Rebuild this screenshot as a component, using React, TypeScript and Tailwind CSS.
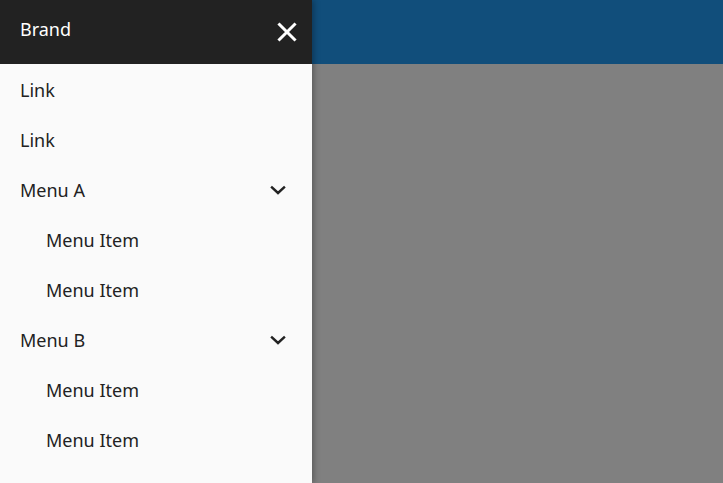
import React from "react";

type NavItem = {
  label: string;
  children?: string[];
};

const items: NavItem[] = [
  { label: "Link" },
  { label: "Link" },
  { label: "Menu A", children: ["Menu Item", "Menu Item"] },
  { label: "Menu B", children: ["Menu Item", "Menu Item"] },
];

const Chevron = () => (
  <svg width="16" height="10" viewBox="0 0 16 10" fill="none" stroke="#222" strokeWidth="2.4" strokeLinecap="square">
    <path d="M2 2.5l6 5.5 6-5.5" />
  </svg>
);

const CloseIcon = () => (
  <svg width="20" height="20" viewBox="0 0 20 20" fill="none" stroke="white" strokeWidth="3" strokeLinecap="square">
    <path d="M2.5 2.5l15 15M17.5 2.5l-15 15" />
  </svg>
);

const Row: React.FC<{ label: string; sub?: boolean; open?: boolean }> = ({ label, sub, open }) => (
  <div className={`flex h-[50px] items-center justify-between pr-[26px] ${sub ? "pl-[46px]" : "pl-5"}`}>
    <span>{label}</span>
    {open && <Chevron />}
  </div>
);

export default function App() {
  return (
    <div className="relative h-[483px] w-[723px] overflow-hidden bg-[#808080] font-['Noto_Sans',sans-serif] text-[18px] text-[#222]">
      <div className="h-16 bg-[#114e7b]" />

      <aside className="absolute inset-y-0 left-0 w-[312px] bg-[#fafafa] shadow-[2px_0_6px_rgba(0,0,0,0.3)]">
        <div className="flex h-16 items-center justify-between bg-[#222] pb-[6px] pl-5 pr-[15px] text-white">
          <span>Brand</span>
          <span className="pt-[6px]">
            <CloseIcon />
          </span>
        </div>
        <nav className="pt-px">
          {items.map((item, i) => (
            <div key={i}>
              <Row label={item.label} open={!!item.children} />
              {item.children?.map((c, j) => (
                <Row key={j} label={c} sub />
              ))}
            </div>
          ))}
        </nav>
      </aside>
    </div>
  );
}
